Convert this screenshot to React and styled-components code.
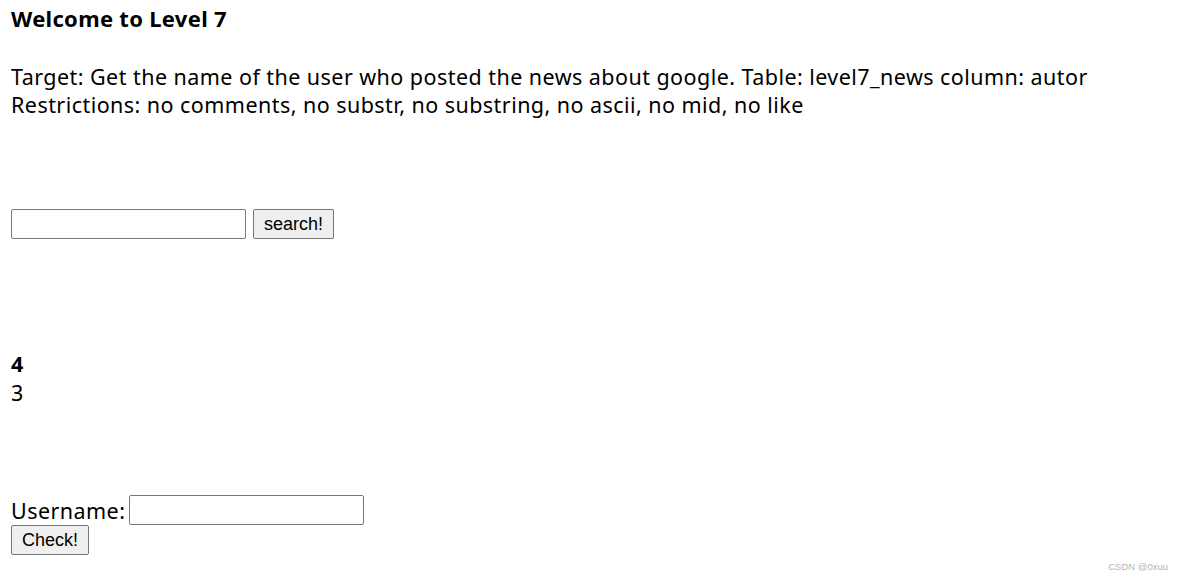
import React from "react";
import styled, { createGlobalStyle } from "styled-components";

const GlobalStyle = createGlobalStyle`
  html, body {
    margin: 0;
    padding: 0;
    background: #fff;
  }
  body {
    font-family: "Noto Sans", "Open Sans", sans-serif;
    color: #000;
  }
`;

const Page = styled.div`
  position: relative;
  width: 1181px;
  height: 581px;
  padding: 4px 11px 0;
  box-sizing: border-box;
  overflow: hidden;
`;

const Title = styled.h3`
  margin: 0;
  font-size: 22px;
  font-weight: 700;
  line-height: 28px;
  letter-spacing: 0.3px;
`;

const Info = styled.p`
  margin: 31px 0 0;
  font-size: 21.5px;
  line-height: 28px;
  letter-spacing: 0.45px;
`;

const SearchForm = styled.form`
  display: flex;
  align-items: center;
  gap: 7px;
  margin-top: 90px;
`;

const TextInput = styled.input`
  width: 235px;
  height: 30px;
  box-sizing: border-box;
  border: 1px solid #767676;
  border-radius: 2px;
  padding: 1px 3px;
  margin: 0;
  font-size: 16px;
`;

const Button = styled.button`
  height: 30px;
  box-sizing: border-box;
  padding: 0 10px;
  margin: 0;
  border: 1px solid #767676;
  border-radius: 2px;
  background: #efefef;
  color: #000;
  font-family: "Liberation Sans", Arial, sans-serif;
  font-size: 18px;
`;

const Result = styled.div`
  margin-top: 110px;
  font-size: 21.5px;
  line-height: 29px;
`;

const ResultTitle = styled.div`
  font-weight: 700;
`;

const CheckForm = styled.form`
  margin-top: 88px;
  display: flex;
  flex-direction: column;
  align-items: flex-start;
`;

const Row = styled.label`
  display: flex;
  align-items: center;
  gap: 4px;
  font-size: 21.5px;
  letter-spacing: 0.45px;
  height: 30px;
`;

const Watermark = styled.span`
  position: absolute;
  right: 13px;
  bottom: 9px;
  font-family: "Liberation Sans", Arial, sans-serif;
  font-size: 9.5px;
  color: #b3b3b3;
`;

export default function App() {
  return (
    <>
      <GlobalStyle />
      <Page>
        <Title>Welcome to Level 7</Title>
        <Info>
          Target: Get the name of the user who posted the news about google. Table: level7_news column: autor
          <br />
          Restrictions: no comments, no substr, no substring, no ascii, no mid, no like
        </Info>
        <SearchForm onSubmit={(e) => e.preventDefault()}>
          <TextInput type="text" />
          <Button type="submit">search!</Button>
        </SearchForm>
        <Result>
          <ResultTitle>4</ResultTitle>
          <div>3</div>
        </Result>
        <CheckForm onSubmit={(e) => e.preventDefault()}>
          <Row>
            Username:<TextInput type="text" />
          </Row>
          <Button type="submit">Check!</Button>
        </CheckForm>
        <Watermark>CSDN @0xuu</Watermark>
      </Page>
    </>
  );
}
